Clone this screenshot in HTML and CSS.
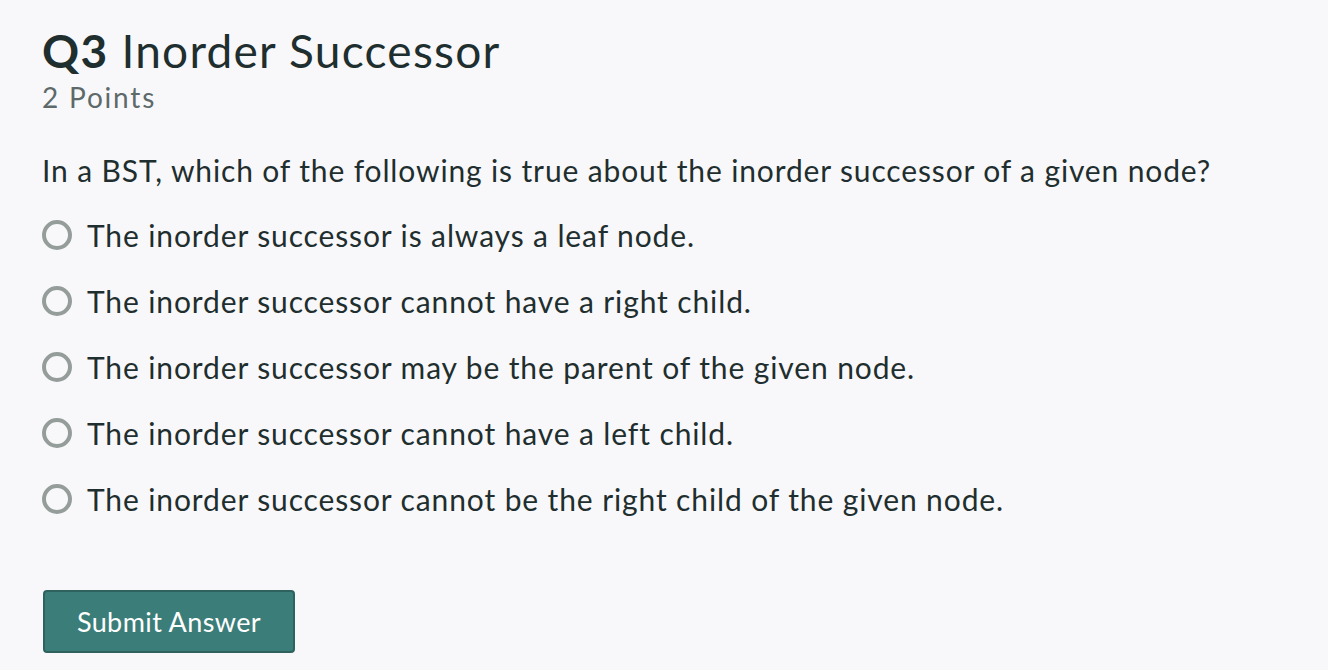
FILE: index.html
```html
<!DOCTYPE html>
<html lang="en">
<head>
    <meta charset="UTF-8">
    <title>Q3 Inorder Successor</title>
    <link rel="stylesheet" href="styles.css">
</head>
<body>
    <div class="question">
        <header class="question-header">
            <h1><strong>Q3</strong> Inorder Successor</h1>
            <div class="points">2 Points</div>
        </header>

        <p class="prompt">In a BST, which of the following is true about the inorder successor of a given node?</p>

        <ul class="options">
            <li class="option"><span class="radio"></span><span>The inorder successor is always a leaf node.</span></li>
            <li class="option"><span class="radio"></span><span>The inorder successor cannot have a right child.</span></li>
            <li class="option"><span class="radio"></span><span>The inorder successor may be the parent of the given node.</span></li>
            <li class="option"><span class="radio"></span><span>The inorder successor cannot have a left child.</span></li>
            <li class="option"><span class="radio"></span><span>The inorder successor cannot be the right child of the given node.</span></li>
        </ul>

        <button class="btn">Submit Answer</button>
    </div>
</body>
</html>
```

FILE: styles.css
```css
:root {
    --text-color: #1f2e2e;
    --muted-color: #5e6a6a;
    --radio-color: #959d9b;
    --btn-color: #3b7d78;
    --btn-border: #2d625e;
    --bg-color: #f8f8fa;
}

body {
    font-family: Lato, 'Noto Sans', sans-serif;
    background-color: var(--bg-color);
    color: var(--text-color);
    margin: 0;
    padding: 0;
}

.question {
    padding: 25px 42px 28px 43px;
}

.question-header h1 {
    margin: 0 0 0 -1px;
    font-size: 46px;
    font-weight: 400;
    line-height: 52px;
    letter-spacing: 1.25px;
}

.question-header strong {
    font-weight: 700;
}

.points {
    margin-left: -1px;
    font-size: 28px;
    color: var(--muted-color);
    line-height: 40px;
    letter-spacing: 1.8px;
}

.prompt {
    margin: 33px 0 0 -1px;
    font-size: 30px;
    line-height: 40px;
    letter-spacing: 0.86px;
}

.options {
    list-style: none;
    margin: 12px 0 0 -1px;
    padding: 0;
}

.option {
    display: flex;
    align-items: center;
    gap: 15px;
    font-size: 30px;
    height: 66px;
    letter-spacing: 0.88px;
}

.radio {
    width: 22px;
    height: 22px;
    border: 4px solid var(--radio-color);
    border-radius: 50%;
    flex-shrink: 0;
}

.btn {
    margin-top: 58px;
    background-color: var(--btn-color);
    color: white;
    border: 2px solid var(--btn-border);
    border-radius: 4px;
    font-family: inherit;
    font-size: 27px;
    letter-spacing: 0.4px;
    width: 252px;
    height: 63px;
    padding: 0;
    cursor: pointer;
}
```
